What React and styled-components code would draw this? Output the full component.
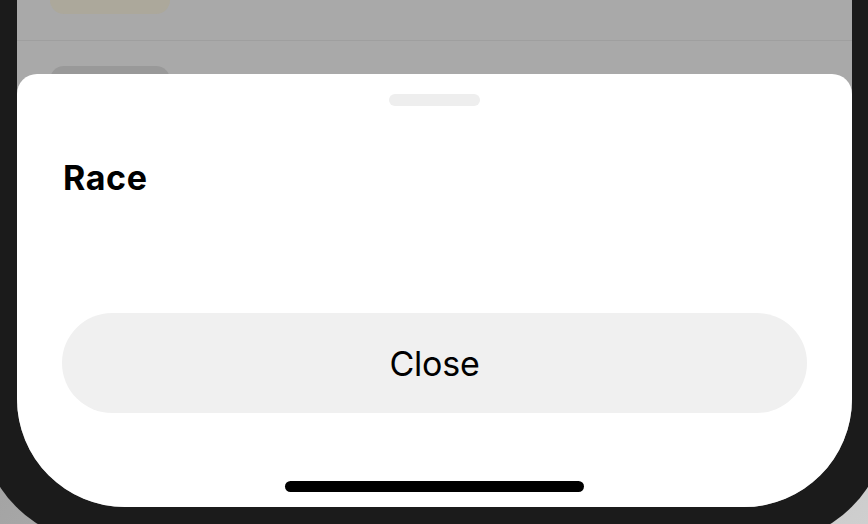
import React from "react";
import styled, { createGlobalStyle } from "styled-components";

const GlobalStyle = createGlobalStyle`
  html, body {
    margin: 0;
    padding: 0;
    width: 868px;
    height: 524px;
    overflow: hidden;
    background: linear-gradient(135deg, #8c8c8c 0%, #cfcfcf 100%);
    font-family: Inter, "Noto Sans", "Liberation Sans", sans-serif;
    -webkit-font-smoothing: antialiased;
  }
`;

const Device = styled.div`
  margin-left: -19px;
  width: 906px;
  height: 542px;
  background: #1b1b1b;
  border-radius: 0 0 120px 120px;
  box-sizing: border-box;
  padding: 0 35px 0 36px;
`;

const Screen = styled.div`
  height: 507px;
  background: #a9a9a9;
  border-radius: 0 0 108px 108px;
  overflow: hidden;
  display: flex;
  flex-direction: column;
`;

const ListBehind = styled.div`
  display: flex;
  flex-direction: column;
  height: 74px;
  flex-shrink: 0;
`;

const Row = styled.div`
  height: 41px;
  padding-left: 33px;
  box-sizing: border-box;
  border-bottom: ${(p) => (p.$divider ? "1px solid #9f9f9f" : "none")};
  flex-shrink: 0;
`;

const Chip = styled.div`
  width: 120px;
  height: 30px;
  border-radius: 14px;
  margin-top: ${(p) => p.$top}px;
  background: ${(p) => p.$color};
`;

const Sheet = styled.div`
  flex: 1;
  background: #ffffff;
  border-radius: 20px 20px 0 0;
  display: flex;
  flex-direction: column;
  align-items: stretch;
  padding: 0 45px;
  box-sizing: border-box;
`;

const Grabber = styled.div`
  align-self: center;
  width: 91px;
  height: 12px;
  border-radius: 6px;
  background: #eeeeee;
  margin-top: 20px;
`;

const Title = styled.h2`
  margin: 52px 0 0 1px;
  font-size: 34px;
  line-height: 40px;
  font-weight: 700;
  color: #000;
  letter-spacing: 0.6px;
`;

const CloseButton = styled.button`
  margin-top: 115px;
  height: 100px;
  border: none;
  border-radius: 50px;
  background: #f0f0f0;
  color: #000;
  font-family: inherit;
  font-size: 34px;
  font-weight: 400;
  letter-spacing: -0.2px;
  display: flex;
  align-items: center;
  justify-content: center;
  cursor: pointer;
`;

const HomeIndicator = styled.div`
  align-self: center;
  margin-top: auto;
  margin-bottom: 15px;
  width: 299px;
  height: 11px;
  border-radius: 6px;
  background: #000;
`;

export default function App() {
  return (
    <>
      <GlobalStyle />
      <Device>
        <Screen>
          <ListBehind>
            <Row $divider>
              <Chip $top={-16} $color="#aca89b" />
            </Row>
            <Row>
              <Chip $top={25} $color="#999999" />
            </Row>
          </ListBehind>
          <Sheet>
            <Grabber />
            <Title>Race</Title>
            <CloseButton>Close</CloseButton>
            <HomeIndicator />
          </Sheet>
        </Screen>
      </Device>
    </>
  );
}
